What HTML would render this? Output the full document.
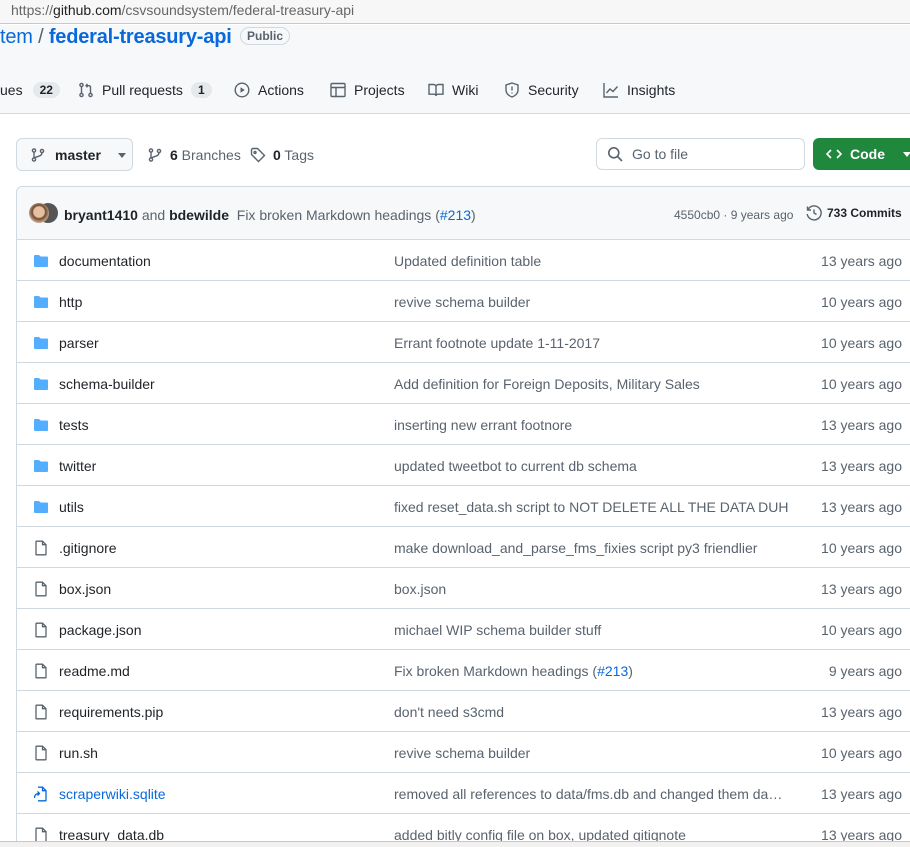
<!DOCTYPE html>
<html style="overflow:hidden;height:847px"><head><meta charset="utf-8"><style>
*{box-sizing:border-box;margin:0;padding:0}
body{width:910px;height:847px;overflow:hidden;background:#fff;font-family:"Liberation Sans",Arial,sans-serif;color:#1f2328;position:relative;font-size:14px}
.abs{position:absolute;white-space:nowrap}
#url{left:0;top:0;width:910px;height:24px;background:#f7f7f7;border-bottom:1px solid #c8c8c8}
#url span{position:absolute;left:11px;top:2px;font-size:14px;color:#666}
#hdr{left:0;top:25px;width:910px;height:89px;background:#f6f8fa;border-bottom:1px solid #d1d9e0}
.blue{color:#0969da}
.cnt{display:inline-block;background:#e6e9ec;border-radius:10px;padding:1px 7px;font-size:12px;font-weight:bold;color:#1f2328;margin-left:6px}
.tab{top:82px;font-size:14px;display:flex;align-items:center;gap:8px}
svg{display:block}
.btn{border:1px solid #d1d9e0;border-radius:6px;background:#f6f8fa}
#box{left:16px;top:186px;width:900px;height:700px;border:1px solid #d1d9e0;border-radius:6px}
#bh{left:17px;top:187px;width:900px;height:53px;background:#f6f8fa;border-bottom:1px solid #d1d9e0;border-radius:6px 0 0 0}
.row{position:absolute;left:17px;width:900px;height:41px;border-bottom:1px solid #d1d9e0}
.row .n{position:absolute;left:42px;top:13px}
.row .m{position:absolute;left:377px;top:13px;color:#59636e}
.row .t{position:absolute;right:15px;top:13px;color:#59636e;width:120px;text-align:right}
.row .i{position:absolute;left:16px;top:13px}
</style></head><body>
<div id="url" class="abs"><span>https://<span style="position:static;color:#222">github.com</span>/csvsoundsystem/federal-treasury-api</span></div>
<div id="hdr" class="abs"></div>
<div class="abs" style="left:0;top:26px;font-size:20px;letter-spacing:-0.2px;color:#0969da">tem <span style="color:#59636e">/</span> <b>federal-treasury-api</b></div>
<div class="abs" style="left:240px;top:27px;border:1px solid #d1d9e0;border-radius:10px;font-size:12px;font-weight:bold;color:#59636e;padding:1px 6px;background:#f6f8fa">Public</div>
<div class="abs tab" style="left:0">ues<span class="cnt" style="margin-left:2px">22</span></div>
<div class="abs tab" style="left:78px"><svg width="16" height="16" viewBox="0 0 16 16" fill="none" stroke="#59636e" stroke-width="1.4"><circle cx="3.5" cy="3" r="1.6"/><circle cx="3.5" cy="13" r="1.6"/><circle cx="12.5" cy="13" r="1.6"/><path d="M3.5 4.6v6.8M12.5 11.4V5.5c0-1-.6-1.8-1.8-1.8H8M9.5 2L8 3.7l1.5 1.6"/></svg>Pull requests<span class="cnt" style="margin-left:0">1</span></div>
<div class="abs tab" style="left:234px"><svg width="16" height="16" viewBox="0 0 16 16" fill="none" stroke="#59636e" stroke-width="1.4"><circle cx="8" cy="8" r="6.8"/><path d="M6.5 5.2v5.6l4.3-2.8z" fill="#59636e" stroke="none"/></svg>Actions</div>
<div class="abs tab" style="left:330px"><svg width="16" height="16" viewBox="0 0 16 16" fill="none" stroke="#59636e" stroke-width="1.4"><rect x="1" y="1.5" width="14" height="13" rx="1"/><path d="M1 5.5h14M6 5.5v9"/></svg>Projects</div>
<div class="abs tab" style="left:428px"><svg width="16" height="16" viewBox="0 0 16 16" fill="none" stroke="#59636e" stroke-width="1.4"><path d="M1 2.5h4.5c1.4 0 2.5 1 2.5 2.3V14c0-1-1-1.8-2.2-1.8H1zM15 2.5h-4.5C9.1 2.5 8 3.5 8 4.8V14c0-1 1-1.8 2.2-1.8H15z"/></svg>Wiki</div>
<div class="abs tab" style="left:504px"><svg width="16" height="16" viewBox="0 0 16 16" fill="none" stroke="#59636e" stroke-width="1.4"><path d="M8 1l6 2v5c0 3.5-3 6-6 7-3-1-6-3.5-6-7V3z"/><path d="M8 4.5v4M8 10.5v1"/></svg>Security</div>
<div class="abs tab" style="left:603px"><svg width="16" height="16" viewBox="0 0 16 16" fill="none" stroke="#59636e" stroke-width="1.4"><path d="M1 1v14h14M3.5 11l3.5-4 3 2.5 4.5-5"/></svg>Insights</div>

<div class="abs btn" style="left:16px;top:138px;width:117px;height:33px;display:flex;align-items:center;padding-left:13px;gap:9px;font-weight:bold"><svg width="16" height="16" viewBox="0 0 16 16" fill="none" stroke="#59636e" stroke-width="1.4"><circle cx="4" cy="3.5" r="1.6"/><circle cx="4" cy="12.5" r="1.6"/><circle cx="12" cy="4" r="1.6"/><path d="M4 5.1v5.8M12 5.6c0 3-2.5 3.5-8 5.2"/></svg>master<span style="margin-left:8px;border:4px solid transparent;border-top:5px solid #59636e;margin-top:5px"></span></div>
<div class="abs" style="left:147px;top:147px;display:flex;align-items:center;gap:7px;color:#59636e"><svg width="16" height="16" viewBox="0 0 16 16" fill="none" stroke="#59636e" stroke-width="1.4"><circle cx="4" cy="3.5" r="1.6"/><circle cx="4" cy="12.5" r="1.6"/><circle cx="12" cy="4" r="1.6"/><path d="M4 5.1v5.8M12 5.6c0 3-2.5 3.5-8 5.2"/></svg><span><b style="color:#1f2328">6</b> Branches</span></div>
<div class="abs" style="left:250px;top:147px;display:flex;align-items:center;gap:7px;color:#59636e"><svg width="16" height="16" viewBox="0 0 16 16" fill="none" stroke="#59636e" stroke-width="1.4"><path d="M1.5 2.5v5l7 7 6-6-7-7h-5z"/><circle cx="5" cy="5.5" r="1"/></svg><span><b style="color:#1f2328">0</b> Tags</span></div>
<div class="abs" style="left:596px;top:138px;width:209px;height:32px;border:1px solid #d1d9e0;border-radius:6px;display:flex;align-items:center;padding-left:10px;gap:9px;color:#59636e;font-size:14px"><svg width="16" height="16" viewBox="0 0 16 16" fill="none" stroke="#59636e" stroke-width="1.6"><circle cx="6.8" cy="6.8" r="5"/><path d="M10.5 10.5L15 15"/></svg>Go to file</div>
<div class="abs" style="left:813px;top:138px;width:110px;height:32px;background:#1f883d;border-radius:6px;color:#fff;font-weight:bold;display:flex;align-items:center;padding-left:13px;gap:8px"><svg width="16" height="16" viewBox="0 0 16 16" fill="none" stroke="#fff" stroke-width="1.6"><path d="M5 4L1 8l4 4M11 4l4 4-4 4"/></svg>Code<span style="margin-left:10px;border:4px solid transparent;border-top:5px solid #fff;margin-top:5px"></span></div>

<div id="box" class="abs"></div>
<div id="bh" class="abs"></div>
<div class="abs" style="left:38px;top:203px;width:20px;height:20px;border-radius:50%;background:#555"></div>
<div class="abs" style="left:29px;top:203px;width:20px;height:20px;border-radius:50%;background:radial-gradient(circle at 50% 45%,#e8c0a0 0 35%,#6b4a30 45%,#c9a58a 70%)"></div>
<div class="abs" style="left:64px;top:207px;font-size:14px"><b>bryant1410</b> <span style="color:#59636e">and</span> <b>bdewilde</b> &nbsp;<span style="color:#59636e">Fix broken Markdown headings (<span class="blue">#213</span>)</span></div>
<div class="abs" style="left:674px;top:208px;font-size:12px;color:#59636e">4550cb0 · 9 years ago</div>
<div class="abs" style="left:806px;top:205px;display:flex;align-items:center;gap:5px;font-size:12px;font-weight:bold"><svg width="16" height="16" viewBox="0 0 16 16" fill="none" stroke="#59636e" stroke-width="1.4"><path d="M2 4.5A7 7 0 1 1 1.2 9"/><path d="M1.5 1.5v3.5H5M8 4.5V8l2.5 1.5"/></svg>733 Commits</div>

<div id="rows"></div>
<script>
var F='<svg width="16" height="16" viewBox="0 0 16 16"><path d="M1 3c0-.6.4-1 1-1h4l1.5 1.5H14c.6 0 1 .4 1 1V13c0 .6-.4 1-1 1H2c-.6 0-1-.4-1-1z" fill="#54aeff"/></svg>';
var D='<svg width="16" height="16" viewBox="0 0 16 16" fill="none" stroke="#59636e" stroke-width="1.3"><path d="M3 1.2h6.5L13 4.7v9.5c0 .4-.3.6-.6.6H3.6c-.3 0-.6-.2-.6-.6V1.8c0-.4.3-.6.6-.6zM9.5 1.2v3.5H13"/></svg>';
var S='<svg width="16" height="16" viewBox="0 0 16 16" fill="none" stroke="#0969da" stroke-width="1.3"><path d="M5 1.2h4.5L13 4.7v9.5c0 .4-.3.6-.6.6H5M9.5 1.2v3.5H13M1.5 12c0-3 1.5-4.5 4.5-4.5M4.5 5.5l2 2-2 2"/></svg>';
var r=[[F,'documentation','Updated definition table','13 years ago'],[F,'http','revive schema builder','10 years ago'],[F,'parser','Errant footnote update 1-11-2017','10 years ago'],[F,'schema-builder','Add definition for Foreign Deposits, Military Sales','10 years ago'],[F,'tests','inserting new errant footnore','13 years ago'],[F,'twitter','updated tweetbot to current db schema','13 years ago'],[F,'utils','fixed reset_data.sh script to NOT DELETE ALL THE DATA DUH','13 years ago'],[D,'.gitignore','make download_and_parse_fms_fixies script py3 friendlier','10 years ago'],[D,'box.json','box.json','13 years ago'],[D,'package.json','michael WIP schema builder stuff','10 years ago'],[D,'readme.md','Fix broken Markdown headings (<span class="blue">#213</span>)','9 years ago'],[D,'requirements.pip',"don't need s3cmd",'13 years ago'],[D,'run.sh','revive schema builder','10 years ago'],[S,'<span class="blue">scraperwiki.sqlite</span>','removed all references to data/fms.db and changed them da…','13 years ago'],[D,'treasury_data.db','added bitly config file on box, updated gitignote','13 years ago']];
var h='';r.forEach(function(x,i){h+='<div class="row" style="top:'+(240+i*41)+'px"><div class="i">'+x[0]+'</div><div class="n">'+x[1]+'</div><div class="m">'+x[2]+'</div><div class="t">'+x[3]+'</div></div>'});
document.getElementById('rows').innerHTML=h;
</script>
<div class="abs" style="left:0;top:841px;width:910px;height:6px;background:#f3f1ef;border-top:1px solid #c8c8c8;z-index:5"></div>
</body></html>
